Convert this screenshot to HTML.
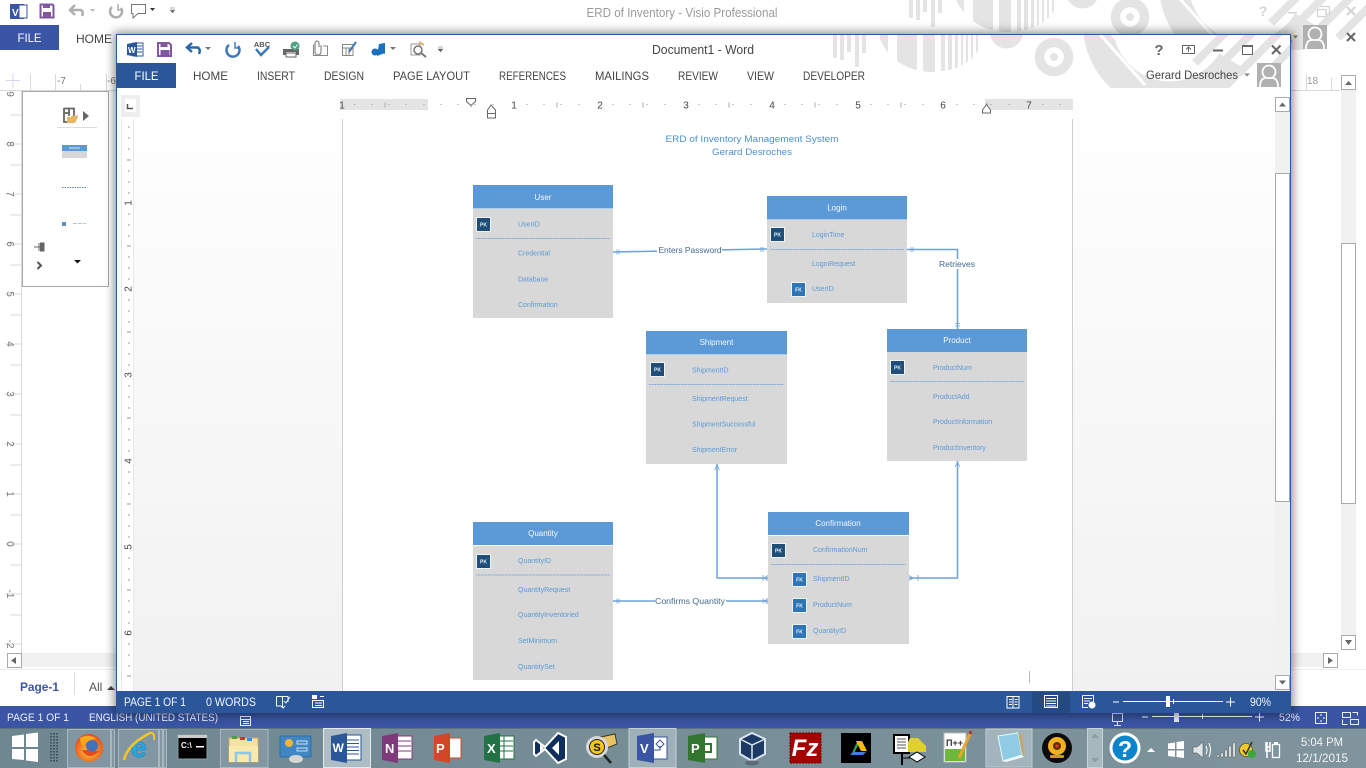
<!DOCTYPE html>
<html><head><meta charset="utf-8"><title>ERD of Inventory</title>
<style>
html,body{margin:0;padding:0;width:1366px;height:768px;overflow:hidden;background:#fff}
svg{position:absolute;left:0;top:0;display:block}
text{font-family:"Liberation Sans",sans-serif}
#win{position:absolute;left:116px;top:34px;width:1175px;height:679px;box-shadow:0 0 9px 2px rgba(0,0,0,.45);background:#fff}
.soft{filter:blur(.3px)}
</style></head><body>
<!-- VISIO BACKGROUND -->
<svg width="1366" height="768" viewBox="0 0 1366 768">
<defs>
<clipPath id="cv"><rect x="0" y="0" width="1366" height="50"/></clipPath>
<clipPath id="cw"><rect x="117" y="35" width="1173" height="53"/></clipPath>
<clipPath id="disc"><path d="M878 20 H985 V35 Q975 72 930 72 Q892 70 878 35Z"/></clipPath>
<g id="decor" fill="#e4e4e4">
 <rect x="833" y="20" width="4" height="38"/><rect x="840" y="20" width="4" height="40"/><rect x="847" y="20" width="4" height="32"/><rect x="855" y="20" width="4" height="47"/><rect x="862" y="20" width="4" height="33"/>
 <g clip-path="url(#disc)">
  <rect x="880" y="20" width="8" height="60"/><rect x="897" y="20" width="20" height="60"/><rect x="923" y="20" width="12" height="60"/><rect x="941" y="20" width="4" height="60"/><rect x="948" y="20" width="4" height="60"/><rect x="955" y="20" width="3" height="60"/><rect x="961" y="20" width="2" height="60"/><rect x="966" y="20" width="2" height="60"/><rect x="971" y="20" width="2" height="60"/><rect x="976" y="20" width="2" height="60"/>
 </g>
 <path d="M990 10 H1023 V32 A16.500 16.500 0 0 1 990 32Z"/>
 <circle cx="1054" cy="57" r="14.500" fill="none" stroke="#e4e4e4" stroke-width="9.500"/>
 <circle cx="1054" cy="57" r="4" fill="#e4e4e4"/>
 <path d="M1232 61 A72 72 0 0 1 1098 25" fill="none" stroke="#e4e4e4" stroke-width="30"/>
 <g stroke="#fff" stroke-width="3"><path d="M1098 32 L1145 85M1106 28 L1150 75M1114 24 L1160 72M1122 20 L1165 65"/></g>
 <g fill="none" stroke="#e4e4e4" stroke-width="8">
  <path d="M1195 63 L1250 8"/><path d="M1210 75 L1275 10"/><path d="M1238 74 L1302 10"/><path d="M1262 78 L1330 10"/>
 </g>
</g>
</defs>
<g clip-path="url(#cv)"><use href="#decor" transform="translate(76,-40)"/></g>
<!-- Visio QAT -->
<rect x="10" y="4" width="14" height="15" fill="#3955a3"/><rect x="19" y="5" width="8" height="13" fill="#fff" stroke="#3955a3"/><text x="12" y="16" font-size="10" font-weight="bold" fill="#fff">V</text>
<path d="M40.500 4.500H52.500L53.500 5.500V17.500H40.500Z" fill="#fff" stroke="#80579f" stroke-width="2"/><rect x="43" y="4" width="7" height="4" fill="#80579f"/><rect x="43" y="12" width="8" height="5" fill="#80579f"/>
<path d="M71 10 H81 Q84 12 82 16" fill="none" stroke="#aeaeae" stroke-width="2.500"/><path d="M75 5 L70 10 L75 15" fill="none" stroke="#aeaeae" stroke-width="2.500"/>
<path d="M90 9h5l-2.500 3z" fill="#bbb"/>
<path d="M112 7 A6 6 0 1 0 121 8" fill="none" stroke="#aeaeae" stroke-width="2.500"/><path d="M118 4 V10 H123" fill="none" stroke="#aeaeae" stroke-width="1.500"/>
<path d="M131.500 4.500H145.500V13.500H138L133 18V13.500H131.500Z" fill="#fff" stroke="#777"/>
<path d="M150 8h5l-2.500 3z" fill="#333"/>
<path d="M170 8h5M170 10h5l-2.500 3z" fill="#777" stroke="#777" stroke-width=".5"/>
<text x="682" y="17" font-size="12.500" fill="#9a9a9a" text-anchor="middle" textLength="191" lengthAdjust="spacingAndGlyphs">ERD of Inventory - Visio Professional</text>
<text x="1263" y="16" font-size="14" font-weight="bold" fill="#d3d3d3" text-anchor="middle">?</text>
<rect x="1288" y="12" width="9" height="1.500" fill="#d3d3d3"/>
<path d="M1320 6.500H1329.500V14H1326M1317.500 9.500H1326V16.500H1317.500Z" fill="none" stroke="#d3d3d3" stroke-width="1.300"/>
<path d="M1347 7L1355 15M1355 7L1347 15" stroke="#d3d3d3" stroke-width="2"/>
<rect x="0" y="25" width="59" height="25" fill="#3955a3"/>
<text x="29.500" y="42" font-size="12" fill="#fff" text-anchor="middle" textLength="24" lengthAdjust="spacingAndGlyphs">FILE</text>
<text x="76" y="43" font-size="12" fill="#444" textLength="36" lengthAdjust="spacingAndGlyphs">HOME</text>
<g font-size="12" fill="#444"><text x="140" y="43">INSERT</text><text x="207" y="43">DESIGN</text><text x="277" y="43">DATA</text><text x="336" y="43">PROCESS</text><text x="413" y="43">REVIEW</text><text x="483" y="43">VIEW</text><text x="1194" y="43">Gerard Desroches</text></g>
<path d="M1293 35.500h5l-2.500 3z" fill="#777"/>
<rect x="1303" y="25" width="24" height="24" fill="#b1b1b1"/><circle cx="1315" cy="34" r="6.500" fill="#b1b1b1" stroke="#fff" stroke-width="1.800"/><path d="M1306 49 Q1306 41 1311 40 L1319 40 Q1324 41 1324 49" fill="#b1b1b1" stroke="#fff" stroke-width="1.800"/>
<path d="M1347 33L1355 41M1355 33L1347 41" stroke="#666" stroke-width="2"/>
<!-- Visio rulers -->
<g stroke="#d8d8d8" fill="none">
<path d="M0 90.500H116M1291 90.500H1340M21.500 90V670"/>
<path d="M30.500 74V90M55.500 74V90M80.500 84V90M106.500 74V90"/>
<path d="M1306.500 74V90M1331.500 78V90"/>
<path d="M5 90.500H21M5 144H21M5 194H21M5 244H21M5 294H21M5 344H21M5 394H21M5 444H21M5 494H21M5 544H21M5 594H21M5 644H21M10 115H21M10 165H21M10 215H21M10 265H21M10 315H21M10 365H21M10 415H21M10 465H21M10 515H21M10 565H21M10 615H21"/>
</g>
<path d="M13 73V88M6 80.500H20" stroke="#d5d5f0"/>
<g font-size="10" fill="#777"><text x="57" y="84">-7</text><text x="107" y="84">-6</text><text x="1307" y="84" fill="#999">18</text></g>
<g font-size="10" fill="#777" text-anchor="middle">
<text transform="translate(10,94) rotate(90)" x="0" y="3">9</text>
<text transform="translate(10,144) rotate(90)" x="0" y="3">8</text>
<text transform="translate(10,194) rotate(90)" x="0" y="3">7</text>
<text transform="translate(10,244) rotate(90)" x="0" y="3">6</text>
<text transform="translate(10,294) rotate(90)" x="0" y="3">5</text>
<text transform="translate(10,344) rotate(90)" x="0" y="3">4</text>
<text transform="translate(10,394) rotate(90)" x="0" y="3">3</text>
<text transform="translate(10,444) rotate(90)" x="0" y="3">2</text>
<text transform="translate(10,494) rotate(90)" x="0" y="3">1</text>
<text transform="translate(10,544) rotate(90)" x="0" y="3">0</text>
<text transform="translate(10,594) rotate(90)" x="0" y="3">-1</text>
<text transform="translate(10,644) rotate(90)" x="0" y="3">-2</text>
</g>
<!-- stencil panel -->
<rect x="22.500" y="91.500" width="86" height="195" fill="#fff" stroke="#aaa"/>
<path d="M64 108.500H74V116M64 108V122H68M69 108V116M64 113H70" fill="none" stroke="#666" stroke-width="1.800"/>
<path d="M67 123V117H71L72 115.500H78V117L75 123Z" fill="#e6b566"/>
<path d="M83 111V121L89 116Z" fill="#666"/>
<path d="M57 127.500H97" stroke="#ddd"/>
<rect x="62" y="145" width="25" height="13" fill="#d7d7d7"/><rect x="62" y="145" width="25" height="6" fill="#5b9bd5"/><path d="M69 148H80" stroke="#dcebf7"/>
<path d="M62 187.500H87" stroke="#5b86c0" stroke-dasharray="1.500 1"/>
<rect x="62" y="222" width="4" height="4" fill="#5f8fc4"/><path d="M73 223.500H86" stroke="#a9c7e6" stroke-dasharray="4 1"/>
<path d="M34 247H44M39 243V251M40 243H44V251H40" stroke="#666" fill="#666"/>
<path d="M37.500 262L41 265.500L37.500 269" fill="none" stroke="#555" stroke-width="2"/>
<path d="M74 260H81L77.500 263.500Z" fill="#111"/>
<!-- Visio scrollbars -->
<rect x="1341" y="90" width="15" height="545" fill="#f1f1f1"/>
<rect x="1341.500" y="243.500" width="14" height="260" fill="#fff" stroke="#aaa"/>
<rect x="1341.500" y="75.500" width="14" height="14" fill="#fff" stroke="#aaa"/><path d="M1345 85H1352L1348.500 81Z" fill="#666"/>
<rect x="1341.500" y="635.500" width="14" height="14" fill="#fff" stroke="#aaa"/><path d="M1345 640H1352L1348.500 645Z" fill="#666"/>
<rect x="21" y="653" width="1302" height="14" fill="#f1f1f1"/>
<rect x="7.500" y="653.500" width="14" height="14" fill="#fff" stroke="#aaa"/><path d="M16 657V664L11 660.500Z" fill="#666"/>
<rect x="1323.500" y="653.500" width="14" height="14" fill="#fff" stroke="#aaa"/><path d="M1328 657V664L1333 660.500Z" fill="#666"/>
<path d="M0 669.500H1366" stroke="#eee"/>
<text x="20" y="691" font-size="12" font-weight="bold" fill="#3955a3" textLength="39" lengthAdjust="spacingAndGlyphs">Page-1</text>
<path d="M74.500 672V695" stroke="#ddd"/>
<text x="89" y="691" font-size="12" fill="#555">All</text><path d="M107 690H115L111 686Z" fill="#444"/>
<!-- Visio status -->
<rect x="0" y="706" width="1366" height="22" fill="#3955a3"/>
<g font-size="11" fill="#eef"><text x="7" y="721" textLength="62" lengthAdjust="spacingAndGlyphs">PAGE 1 OF 1</text><text x="89" y="721" textLength="129" lengthAdjust="spacingAndGlyphs">ENGLISH (UNITED STATES)</text><text x="1279" y="721" textLength="21" lengthAdjust="spacingAndGlyphs">52%</text></g>
<path d="M240.500 716.500H250.500V725.500H240.500ZM240 719.500H251M243 721.500H249M243 723.500H249" fill="none" stroke="#eef"/>
<path d="M1112.500 713.500H1122.500V721.500H1112.500ZM1117.500 722V725M1114 725.500H1121" fill="none" stroke="#dfe4f2"/>
<path d="M1142 717H1148M1152 716.500H1252M1202.500 714V719M1255 717H1264M1259.500 712.500V721.500" stroke="#fff" fill="none"/>
<rect x="1174" y="712" width="5" height="10" fill="#e8ebf5"/>
<rect x="1315.500" y="712.500" width="11" height="11" fill="none" stroke="#eef"/>
<path d="M1321 714v2M1321 720v2M1317 718h2M1323 718h2" stroke="#fff"/>
<path d="M1342.500 712.500H1350.500V717.500H1342.500ZM1352.500 712.500H1357.500V715.500M1342.500 719.500V724.500H1347.500M1350.500 719.500H1358.500V724.500H1350.500Z" fill="none" stroke="#eef"/>
<!-- Taskbar -->
<defs><linearGradient id="tb" x1="0" x2="1" y1="0" y2="0"><stop offset="0" stop-color="#6f8791"/><stop offset="1" stop-color="#7f949d"/></linearGradient>
<radialGradient id="ff" cx=".5" cy=".6" r=".6"><stop offset="0" stop-color="#ffc83a"/><stop offset="1" stop-color="#e2491c"/></radialGradient></defs>
<rect x="0" y="728" width="1366" height="40" fill="url(#tb)"/>
<rect x="0" y="728" width="1366" height="1" fill="#5b7380"/>
<path d="M12 736L24 734.500V747H12ZM26 734L38 732.500V747H26ZM12 749H24V760L12 759ZM26 749H38V762L26 760.500Z" fill="#fff"/>
<path d="M51 733V762M54 733V762M57 733V762" stroke="#33444c" stroke-width="1.500" stroke-dasharray="1.500 1.500"/>
<g fill="#8fa3ad" fill-opacity=".55" stroke="#a9b8bf"><rect x="67.500" y="729.500" width="43" height="38"/><rect x="111.500" y="729.500" width="3" height="38"/><rect x="118.500" y="729.500" width="40" height="38"/><rect x="159.500" y="729.500" width="3" height="38"/><rect x="163.500" y="729.500" width="3" height="38"/></g>
<circle cx="89" cy="748" r="14" fill="url(#ff)"/><path d="M80 738 Q89 733 97 739 Q92 738 91 742 Q84 741 84 746 Q80 744 80 738Z" fill="#f8a81c"/><circle cx="92" cy="746" r="6" fill="#4472b8"/><path d="M82 750 Q89 762 100 750 Q94 753 88 750Z" fill="#e2491c"/>
<text x="139" y="757" font-size="29" font-weight="bold" fill="#25a7e0" stroke="#1a7dc0" stroke-width=".5" text-anchor="middle">e</text>
<path d="M124 760 Q127 745 150 733" fill="none" stroke="#f6c329" stroke-width="2.500"/><path d="M150 733 Q155 732 154 740" fill="none" stroke="#f6c329" stroke-width="2"/>
<rect x="178" y="735" width="29" height="24" fill="#000" stroke="#8a9ba3"/><rect x="178" y="735" width="29" height="3" fill="#ccc"/><text x="181" y="748" font-size="8" font-weight="bold" fill="#fff">C:\</text><rect x="196" y="746" width="8" height="1.500" fill="#fff"/>
<rect x="220.500" y="729.500" width="47.500" height="38" fill="#8fa3ad" fill-opacity=".55" stroke="#a9b8bf"/>
<path d="M229 738H258V762H229Z" fill="#f4e2a3" stroke="#c9a85c"/><rect x="232" y="736" width="5" height="3" fill="#4b9f45"/><rect x="240" y="737" width="5" height="3" fill="#c33"/><rect x="247" y="738" width="5" height="3" fill="#3a8fd8"/><path d="M229 746H258V762H229Z" fill="#f9e9ad"/><path d="M236 762V753H250V762" fill="none" stroke="#8cc6e8" stroke-width="2.500"/>
<rect x="280" y="736" width="31" height="21" rx="1" fill="#3f86c2" stroke="#2d6da8"/><circle cx="289" cy="743" r="4" fill="#f6b23b"/><rect x="297" y="741" width="10" height="3" fill="none" stroke="#cde"/><rect x="297" y="748" width="10" height="3" fill="none" stroke="#cde"/><ellipse cx="296" cy="759" rx="7" ry="4" fill="#d5d5d5"/>
<rect x="323.500" y="728.500" width="47" height="39" fill="#aebcc3" stroke="#e4e9ec"/>
<rect x="340" y="735" width="21" height="25" fill="#fff" stroke="#2b579a"/><path d="M343 740H359M343 743.500H359M343 747H359M343 750.500H359M343 754H359" stroke="#2b579a"/><path d="M331 736L347 733V763L331 760Z" fill="#2b579a"/><text x="332.500" y="752" font-size="12" font-weight="bold" fill="#fff">W</text>
<rect x="392" y="736" width="20" height="23" fill="#fff" stroke="#80397b"/><path d="M395 741H411M395 746H411M395 751H411" stroke="#80397b"/><path d="M382 736L398 733V763L382 760Z" fill="#80397b"/><text x="385" y="753" font-size="13" font-weight="bold" fill="#fff">N</text>
<rect x="445" y="738" width="16" height="20" fill="#fff" stroke="#d24726"/><path d="M434 736L450 733V763L434 760Z" fill="#d24726"/><text x="436" y="753" font-size="13" font-weight="bold" fill="#fff">P</text>
<rect x="495" y="736" width="19" height="23" fill="#fff" stroke="#217346"/><path d="M498 741H513M498 746H513M498 751H513M504 736V759" stroke="#217346"/><path d="M484 736L500 733V763L484 760Z" fill="#217346"/><text x="487" y="753" font-size="13" font-weight="bold" fill="#fff">X</text>
<path d="M536 740L545 747L558 733L566 737V759L558 763L545 749L536 756L534 754V742Z" fill="#0f2f5f" stroke="#fff" stroke-width="2"/><path d="M540 744V752L544 748ZM559 741V755L552 748Z" fill="#fff"/>
<path d="M596 738L615 734L617 744L602 750Z" fill="#e8c36a" stroke="#3a3a20"/><circle cx="597" cy="747" r="11" fill="#d8d8d8"/><circle cx="597" cy="747" r="7.500" fill="#f5c518" stroke="#222"/><text x="597" y="751" font-size="11" font-weight="bold" fill="#111" text-anchor="middle">S</text><path d="M604 755L611 763" stroke="#222" stroke-width="2.500"/>
<rect x="629" y="728.500" width="47" height="39" fill="#9fb0b8" stroke="#c5d0d5"/>
<rect x="647" y="737" width="20" height="22" fill="#fff" stroke="#3955a3"/><path d="M660 740L664 744L660 748L656 744Z" fill="none" stroke="#3955a3"/><path d="M652 750H660V746M652 750V755" stroke="#3955a3" fill="none"/><path d="M637 736L654 733V763L637 760Z" fill="#3955a3"/><text x="640" y="753" font-size="13" font-weight="bold" fill="#fff">V</text>
<rect x="698" y="737" width="19" height="22" fill="#fff" stroke="#31752f"/><path d="M703 744H711V752H704" fill="none" stroke="#31752f" stroke-width="2"/><path d="M688 736L705 733V763L688 760Z" fill="#31752f"/><text x="691" y="753" font-size="13" font-weight="bold" fill="#fff">P</text>
<path d="M740 739L752 733L765 739V754L752 761L740 754Z" fill="#1c3a63" stroke="#d8e4f0" stroke-width="2"/><path d="M740 739L752 745L765 739M752 745V761" stroke="#d8e4f0" stroke-width="1.500" fill="none"/><ellipse cx="752" cy="763" rx="7" ry="2.500" fill="#5c6b74"/>
<rect x="790" y="733" width="31" height="30" fill="#a60000" stroke="#6b0000" stroke-dasharray="2 1"/><text x="805" y="756" font-size="24" font-style="italic" font-weight="bold" fill="#fff" text-anchor="middle">Fz</text>
<rect x="841" y="733" width="30" height="30" fill="#000"/><path d="M851 755L857 742H860L853 755Z" fill="#32a350"/><path d="M856 741H862L867 751H861Z" fill="#fbbc05"/><path d="M850 755L853 752H866L863 755Z" fill="#3b7de9"/>
<rect x="894" y="735" width="15" height="18" fill="#fff" stroke="#000" stroke-width="2"/><path d="M897 739H906M897 742H906M897 745H906M897 748H906" stroke="#555"/><path d="M902 753V765" stroke="#000" stroke-width="2"/><path d="M910 738H918L926 746V752H908V742Z" fill="#dfd030"/><path d="M909 757L917 752L925 757L917 762Z" fill="#fff" stroke="#000"/><path d="M902 758H910" stroke="#000"/>
<rect x="944" y="733" width="22" height="29" fill="#fff" stroke="#bbb"/><rect x="945" y="749" width="20" height="12" fill="#6bb83a"/><text x="946" y="746" font-size="9" font-weight="bold" fill="#333">Π++</text><path d="M959 758L970 734" stroke="#e8a72c" stroke-width="3"/><path d="M970 734L971 731" stroke="#b33" stroke-width="3"/>
<rect x="986" y="729" width="46" height="38" fill="#a3b4bc" stroke="#c0ccd1"/>
<path d="M998 736L1018 733L1022 755L1003 761Z" fill="#8fcbe4" stroke="#dff"/><path d="M1018 733L1022 734L1025 754L1022 755Z" fill="#c2a878"/><path d="M1003 761L1022 755L1024 757L1006 762Z" fill="#f4f4f4"/>
<circle cx="1057" cy="748" r="15" fill="#0b0b0b"/><circle cx="1057" cy="746" r="9" fill="#f2b11e"/><circle cx="1057" cy="746" r="4" fill="#5a3200"/><circle cx="1057" cy="746" r="1.500" fill="#e33"/><rect x="1050" y="755" width="14" height="3" rx="1" fill="#d7951a"/>
<rect x="1087.500" y="728.500" width="15" height="39" fill="#a7b7be" stroke="#c8d2d7"/><path d="M1091 738H1099L1095 733.500Z" fill="#8b9ca4"/><path d="M1091 758H1099L1095 762.500Z" fill="#8b9ca4"/>
<circle cx="1125" cy="748" r="15.500" fill="#fff"/><circle cx="1125" cy="748" r="12.500" fill="#0a85cc"/><text x="1125" y="757" font-size="23" font-weight="bold" fill="#fff" text-anchor="middle">?</text>
<path d="M1147 752H1155L1151 748Z" fill="#fff"/>
<path d="M1168 743.500L1175 742.500V749H1168ZM1176.500 742L1184 741V749H1176.500ZM1168 750.500H1175V757L1168 756ZM1176.500 750.500H1184V758L1176.500 757Z" fill="#fff"/>
<path d="M1193 747H1197L1203 742V758L1197 753H1193Z" fill="#dfe6ea" stroke="#444" stroke-width=".5"/><path d="M1206 746Q1208 750 1206 754M1209 743Q1212 750 1209 757" fill="none" stroke="#fff"/>
<path d="M1217 755h2v2h-2zM1221 753h2v4h-2zM1225 750h2v7h-2zM1229 746h2v11h-2zM1233 743h2v14h-2z" fill="#fff" stroke="#444" stroke-width=".4"/>
<circle cx="1246" cy="750" r="6.500" fill="#f3c92a" stroke="#333" stroke-width=".6"/><path d="M1243 750L1246 754L1252 742" fill="none" stroke="#333" stroke-width="1.500"/><circle cx="1252" cy="754" r="4" fill="#38a838"/>
<path d="M1267 742V758M1266 747H1270V751H1266ZM1266 742V747M1270 742V747" fill="none" stroke="#fff" stroke-width="1.500"/><rect x="1272.500" y="744.500" width="7" height="13" fill="none" stroke="#fff" stroke-width="1.300"/><rect x="1274" y="742" width="4" height="2" fill="#fff"/>
<text x="1322" y="746" font-size="12" fill="#f3f3f3" text-anchor="middle" textLength="42" lengthAdjust="spacingAndGlyphs">5:04 PM</text>
<text x="1322" y="762" font-size="12" fill="#f3f3f3" text-anchor="middle" textLength="52" lengthAdjust="spacingAndGlyphs">12/1/2015</text>
</svg>

<!-- WORD WINDOW -->
<div id="win"></div>
<svg width="1366" height="768" viewBox="0 0 1366 768">
<defs><linearGradient id="wg" x1="0" x2="0" y1="0" y2="1"><stop offset="0" stop-color="#fff"/><stop offset="1" stop-color="#f1f1f1"/></linearGradient></defs>
<rect x="116.500" y="34.500" width="1174" height="678" fill="#fff" stroke="#2b579a"/>
<g clip-path="url(#cw)"><use href="#decor"/></g>
<!-- QAT -->
<rect x="133" y="43" width="10" height="13" fill="#fff" stroke="#2b579a"/><path d="M137 46H142M137 49H142M137 52H142" stroke="#2b579a"/><path d="M127 44L137 42V57L127 55Z" fill="#2b579a"/><text x="128" y="53" font-size="8" font-weight="bold" fill="#fff">W</text>
<path d="M158 43H169L171 45V56H158Z" fill="#fff" stroke="#80579f" stroke-width="2"/><rect x="160.500" y="43" width="7" height="4" fill="#80579f"/><rect x="160.500" y="50" width="9" height="6" fill="#80579f"/>
<path d="M188 47.500H198Q201 50 199 54" fill="none" stroke="#2b67a8" stroke-width="2.500"/><path d="M192 43L187 47.500L192 52" fill="none" stroke="#2b67a8" stroke-width="2.500"/>
<path d="M205 47h6l-3 3z" fill="#777"/>
<path d="M229 45 A6.500 6.500 0 1 0 238 46" fill="none" stroke="#3d7ab8" stroke-width="2.500"/><path d="M235 42V48H240" fill="none" stroke="#3d7ab8" stroke-width="1.500"/>
<text x="262" y="47" font-size="7.500" font-weight="bold" fill="#555" text-anchor="middle">ABC</text><path d="M256 49L261 55L269 47" fill="none" stroke="#3d7ab8" stroke-width="2.500"/>
<path d="M283 49H299V55H296V52H286V55H283Z" fill="#666"/><rect x="286" y="53" width="10" height="4" fill="#fff" stroke="#666"/><circle cx="295" cy="46" r="4.500" fill="#4f9e80"/><path d="M293 46L295 48L297.500 44.500" fill="none" stroke="#fff"/>
<path d="M313.500 44.500V55.500H327.500V46H323" fill="none" stroke="#888"/><path d="M319 47V43A2 2 0 0 0 315 43V52A3 3 0 0 0 321 52V45" fill="none" stroke="#888" stroke-width="1.200"/>
<path d="M342.500 44.500H353V55.500H342.500Z" fill="none" stroke="#888"/><path d="M342.500 48H353M346 48V55M349 48V55" stroke="#888"/><path d="M349 52L356 42" stroke="#3d7ab8" stroke-width="2"/>
<path d="M377 50L385 44V53L377 56Z" fill="#1d6fc1"/><path d="M379 44L385 43L385 54L378 50Z" fill="#1d6fc1"/><circle cx="375" cy="52" r="3.500" fill="#1d6fc1"/>
<path d="M390 47h6l-3 3z" fill="#777"/>
<rect x="411" y="44" width="9" height="11" fill="none" stroke="#999"/><circle cx="418" cy="50" r="4" fill="#fff" stroke="#777" stroke-width="1.500"/><path d="M421 53L426 57" stroke="#777" stroke-width="2"/><path d="M419 42L424 45" stroke="#e3b36a" stroke-width="2"/>
<path d="M438 47h5M438 49h5l-2.500 3z" fill="#666" stroke="#666" stroke-width=".5"/>
<text x="703" y="54" font-size="13" fill="#444" text-anchor="middle" textLength="102" lengthAdjust="spacingAndGlyphs">Document1 - Word</text>
<text x="1159" y="55" font-size="15" font-weight="bold" fill="#666" text-anchor="middle">?</text>
<path d="M1182.500 45.500H1194.500V53.500H1182.500Z M1188.500 52V47.500M1186 49.500L1188.500 47L1191 49.500" fill="none" stroke="#666"/>
<rect x="1213" y="49.500" width="10" height="2" fill="#666"/>
<rect x="1242.500" y="45.500" width="10" height="9" fill="none" stroke="#666"/><rect x="1242" y="45" width="11" height="2" fill="#666"/>
<path d="M1272 45.500L1280.500 54M1280.500 45.500L1272 54" stroke="#666" stroke-width="2"/>
<!-- tabs -->
<rect x="117" y="63" width="59" height="25" fill="#2b579a"/>
<text x="146.500" y="80" font-size="12" fill="#fff" text-anchor="middle" textLength="24" lengthAdjust="spacingAndGlyphs">FILE</text>
<g font-size="12" fill="#444">
<text x="193" y="80" textLength="35" lengthAdjust="spacingAndGlyphs">HOME</text><text x="257" y="80" textLength="38" lengthAdjust="spacingAndGlyphs">INSERT</text><text x="324" y="80" textLength="40" lengthAdjust="spacingAndGlyphs">DESIGN</text><text x="393" y="80" textLength="77" lengthAdjust="spacingAndGlyphs">PAGE LAYOUT</text><text x="499" y="80" textLength="67" lengthAdjust="spacingAndGlyphs">REFERENCES</text><text x="595" y="80" textLength="54" lengthAdjust="spacingAndGlyphs">MAILINGS</text><text x="678" y="80" textLength="40" lengthAdjust="spacingAndGlyphs">REVIEW</text><text x="747" y="80" textLength="27" lengthAdjust="spacingAndGlyphs">VIEW</text><text x="803" y="80" textLength="62" lengthAdjust="spacingAndGlyphs">DEVELOPER</text>
<text x="1146" y="79" textLength="92" lengthAdjust="spacingAndGlyphs">Gerard Desroches</text></g>
<path d="M1244 73.500h6l-3 3z" fill="#888"/>
<rect x="1257" y="63" width="24" height="24" fill="#b1b1b1"/><circle cx="1269" cy="72" r="6.500" fill="#b1b1b1" stroke="#fff" stroke-width="1.800"/><path d="M1260 87Q1260 79 1265 78L1273 78Q1278 79 1278 87" fill="#b1b1b1" stroke="#fff" stroke-width="1.800"/>
<!-- canvas -->
<rect x="117" y="89" width="1158" height="602" fill="url(#wg)"/>
<rect x="117" y="89" width="16" height="602" fill="#fff"/>
<rect x="121" y="95" width="19" height="22" fill="#eee"/><rect x="125" y="99" width="11" height="13" fill="#fff"/><path d="M127.500 104V108.500H133" fill="none" stroke="#555" stroke-width="1.500"/>
<!-- h ruler -->
<rect x="340" y="99" width="733" height="11" fill="#e4e4e4"/><rect x="428" y="99" width="557" height="11" fill="#fff"/>
<g stroke="#999"><path d="M354.500 104v1M372 104v1M389 104v1M406 104v1M424 104v1M441 104v1M458 104v1M475 104v1M493 104v1M527 104v1M544 104v1M561 104v1M579 104v1M613 104v1M630 104v1M647 104v1M665 104v1M699 104v1M716 104v1M733 104v1M751 104v1M785 104v1M802 104v1M819 104v1M837 104v1M871 104v1M888 104v1M905 104v1M923 104v1M957 104v1M974 104v1M991 104v1M1009 104v1M1043 104v1M1060 104v1"/><path d="M385 102.500v5M471 102.500v5M557 102.500v5M643 102.500v5M729 102.500v5M815 102.500v5M901 102.500v5M987 102.500v5" stroke="#aaa"/></g>
<g font-size="10" fill="#444" text-anchor="middle"><text x="342" y="108.500">1</text><text x="514" y="108.500">1</text><text x="600" y="108.500">2</text><text x="686" y="108.500">3</text><text x="772" y="108.500">4</text><text x="858" y="108.500">5</text><text x="943" y="108.500">6</text><text x="1029" y="108.500">7</text></g>
<path d="M466.500 98.500H475.500V101.500L471 105.500L466.500 101.500Z" fill="#fff" stroke="#666"/>
<path d="M491 105L487.500 110V113.500H495.500V110Z" fill="#fff" stroke="#666"/><rect x="487.500" y="113.500" width="8" height="4.500" fill="#fff" stroke="#666"/>
<path d="M986.500 104.500L982.500 110V113H990.500V110Z" fill="#fff" stroke="#666"/>
<!-- v ruler -->
<path d="M121.500 119V691M133.500 119V691" stroke="#e8e8e8"/>
<g stroke="#999"><path d="M128 127h2M128 138h2M128 149h2M127 160h4M128 171h2M128 182h2M128 193h2M128 214h2M128 225h2M128 236h2M127 246h4M128 257h2M128 268h2M128 279h2M128 300h2M128 311h2M128 322h2M127 332h4M128 343h2M128 354h2M128 365h2M128 386h2M128 397h2M128 408h2M127 418h4M128 429h2M128 440h2M128 451h2M128 472h2M128 483h2M128 494h2M127 504h4M128 515h2M128 526h2M128 537h2M128 558h2M128 569h2M128 580h2M127 590h4M128 601h2M128 612h2M128 623h2M128 644h2M128 655h2M128 666h2M127 676h4"/></g>
<g font-size="10" fill="#444" text-anchor="middle">
<text transform="translate(128,203) rotate(-90)" y="3.500">1</text><text transform="translate(128,289) rotate(-90)" y="3.500">2</text><text transform="translate(128,375) rotate(-90)" y="3.500">3</text><text transform="translate(128,461) rotate(-90)" y="3.500">4</text><text transform="translate(128,547) rotate(-90)" y="3.500">5</text><text transform="translate(128,633) rotate(-90)" y="3.500">6</text>
</g>
<!-- page -->
<rect x="343" y="119" width="729" height="572" fill="#fff"/>
<path d="M342.500 119V691M1072.500 119V691" stroke="#cfcfcf"/>
<path d="M1029.500 671V683" stroke="#bbb"/>
<!-- scrollbar -->
<rect x="1275" y="97" width="15" height="594" fill="#f1f1f1"/>
<rect x="1275.500" y="173.500" width="14" height="328" fill="#fff" stroke="#aaa"/>
<rect x="1275.500" y="97.500" width="14" height="14" fill="#fff" stroke="#aaa"/><path d="M1279 106.500H1286L1282.500 102.500Z" fill="#666"/>
<rect x="1275.500" y="675.500" width="14" height="14" fill="#fff" stroke="#aaa"/><path d="M1279 680.500H1286L1282.500 684.500Z" fill="#666"/>
<!-- diagram -->
<g class="soft">
<g font-size="9.500" fill="#4f8fd0" text-anchor="middle"><text x="752" y="142" textLength="173" lengthAdjust="spacingAndGlyphs">ERD of Inventory Management System</text><text x="752" y="155" textLength="80" lengthAdjust="spacingAndGlyphs">Gerard Desroches</text></g>
<g fill="none" stroke="#6ea2d8" stroke-width="1.500">
<path d="M613 252L767 249"/><path d="M907 249.500H957.500V329"/><path d="M717 464V578H768"/><path d="M957.500 461V578H908"/><path d="M613 601H768"/>
<path stroke-width=".8" d="M617 249.500v5M619 249.500v5M761 247v5M763 247v5M911 247v5M913 247v5M955 323.500h5M955 326h5M714.500 470l2.500-5 2.500 5M763 575v6M768 575.500l-4 2.500 4 2.500M918 575v6M909 575.500l4 2.500-4 2.500M617 598.500v5M619 598.500v5M763 598.500v5M768 598.500l-4 2.500 4 2.500M955 467l2.500-5 2.500 5"/>
</g>
<g fill="#fff"><rect x="657" y="245" width="65" height="10"/><rect x="939" y="259" width="37" height="10"/><rect x="655" y="596" width="71" height="10"/></g>
<g font-size="8.500" fill="#44688f" text-anchor="middle"><text x="690" y="253" textLength="63" lengthAdjust="spacingAndGlyphs">Enters Password</text><text x="957" y="267" textLength="36" lengthAdjust="spacingAndGlyphs">Retrieves</text><text x="690" y="604" textLength="70" lengthAdjust="spacingAndGlyphs">Confirms Quantity</text></g>
<!-- boxes -->
<g fill="#d8d8d8">
<rect x="473" y="209" width="140" height="109"/><rect x="767" y="220" width="140" height="83"/><rect x="646" y="355" width="141" height="109"/><rect x="887" y="352" width="140" height="109"/><rect x="473" y="546" width="140" height="134"/><rect x="768" y="536" width="141" height="108"/>
</g>
<g fill="#5b9ad6">
<rect x="473" y="185" width="140" height="23.500"/><rect x="767" y="196" width="140" height="23.500"/><rect x="646" y="331" width="141" height="23.500"/><rect x="887" y="329" width="140" height="23"/><rect x="473" y="522" width="140" height="23"/><rect x="768" y="512" width="141" height="23"/>
</g>
<g font-size="8" fill="#f4f8fc" text-anchor="middle"><text x="543" y="200">User</text><text x="837" y="210.500">Login</text><text x="716.500" y="345">Shipment</text><text x="957" y="343">Product</text><text x="543" y="536">Quantity</text><text x="838" y="526">Confirmation</text></g>
<g stroke="#7ba9d8" stroke-width="1" stroke-dasharray="1 .5" fill="none"><path d="M476 238.500H610M770 249.500H904M649 384.500H784M890 381.500H1024M476 575H610M771 564.500H906"/></g>
<g font-size="7" fill="#5b9ad6">
<text x="518" y="226.500">UserID</text><text x="518" y="255.500">Credential</text><text x="518" y="281.500">Database</text><text x="518" y="307">Confirmation</text>
<text x="812" y="237">LoginTime</text><text x="812" y="266">LoginRequest</text><text x="812" y="291">UserID</text>
<text x="692" y="372.500">ShipmentID</text><text x="692" y="401">ShipmentRequest</text><text x="692" y="426.500">ShipmentSuccessful</text><text x="692" y="452">ShipmentError</text>
<text x="933" y="370">ProductNum</text><text x="933" y="399">ProductAdd</text><text x="933" y="424">ProductInformation</text><text x="933" y="450">ProductInventory</text>
<text x="518" y="563">QuantityID</text><text x="518" y="592">QuantityRequest</text><text x="518" y="617">QuantityInventoried</text><text x="518" y="643">SetMinimum</text><text x="518" y="669">QuantitySet</text>
<text x="813" y="552">ConfirmationNum</text><text x="813" y="581">ShipmentID</text><text x="813" y="607">ProductNum</text><text x="813" y="633">QuantityID</text>
</g>
<g stroke="#eef3f8">
<rect x="476.500" y="217.500" width="14" height="14" fill="#1f4e79"/><rect x="770.500" y="227.500" width="14" height="14" fill="#1f4e79"/><rect x="650.500" y="362.500" width="14" height="14" fill="#1f4e79"/><rect x="890.500" y="360.500" width="14" height="14" fill="#1f4e79"/><rect x="476.500" y="554.500" width="14" height="14" fill="#1f4e79"/><rect x="771.500" y="543.500" width="14" height="14" fill="#1f4e79"/>
<rect x="791.500" y="282.500" width="14" height="14" fill="#2e75b6"/><rect x="792.500" y="572.500" width="14" height="14" fill="#2e75b6"/><rect x="792.500" y="598.500" width="14" height="14" fill="#2e75b6"/><rect x="792.500" y="624.500" width="14" height="14" fill="#2e75b6"/>
</g>
<g font-size="5" font-weight="bold" fill="#e6eef6" text-anchor="middle">
<text x="483.500" y="226.500">PK</text><text x="777.500" y="236.500">PK</text><text x="657.500" y="371.500">PK</text><text x="897.500" y="369.500">PK</text><text x="483.500" y="563.500">PK</text><text x="778.500" y="552.500">PK</text><text x="798.500" y="291.500">FK</text><text x="799.500" y="581.500">FK</text><text x="799.500" y="607.500">FK</text><text x="799.500" y="633.500">FK</text>
</g>
</g>
<!-- word status -->
<rect x="117" y="691" width="1174" height="22" fill="#2b579a"/>
<rect x="1032" y="692" width="38" height="21" fill="#234a83"/>
<g font-size="11.500" fill="#f2f5fa"><text x="124" y="706" textLength="62" lengthAdjust="spacingAndGlyphs">PAGE 1 OF 1</text><text x="206" y="706" textLength="50" lengthAdjust="spacingAndGlyphs">0 WORDS</text><text x="1250" y="706" textLength="21" lengthAdjust="spacingAndGlyphs">90%</text></g>
<path d="M276.500 696.500H282.500V707M282.500 696.500H288V702M276.500 696.500V706H281L283 708L285 706M284 701L286 703L290 697" fill="none" stroke="#f2f5fa"/>
<rect x="312" y="695" width="5" height="4" fill="#fff"/><path d="M320 696.500H324M312.500 700.500H323.500V707.500H312.500ZM315 703H322M315 705.500H322" fill="none" stroke="#fff"/>
<path d="M1007 696.500H1019V708H1007ZM1013 696.500V708M1009 699.500H1012M1009 702H1012M1009 704.500H1012M1014.500 699.500H1017.500M1014.500 702H1017.500M1014.500 704.500H1017.500" fill="none" stroke="#fff"/>
<rect x="1044.500" y="695.500" width="13" height="12" fill="none" stroke="#fff"/><path d="M1046 698.500H1056M1046 701H1056M1046 703.500H1056M1046 706H1056" stroke="#fff"/>
<path d="M1082.500 695.500H1093.500V702M1082.500 695.500V707.500H1088M1084 698.500H1092M1084 701H1090M1084 703.500H1088" fill="none" stroke="#f2f5fa"/><circle cx="1092" cy="705" r="3.500" fill="#fff"/>
<path d="M1113 702H1119M1123 701.500H1223M1173.500 699V704M1226 702H1235M1230.500 697.500V706.500" stroke="#fff" fill="none"/>
<rect x="1166" y="696" width="4" height="11" fill="#fff"/>
</svg>
</body></html>
